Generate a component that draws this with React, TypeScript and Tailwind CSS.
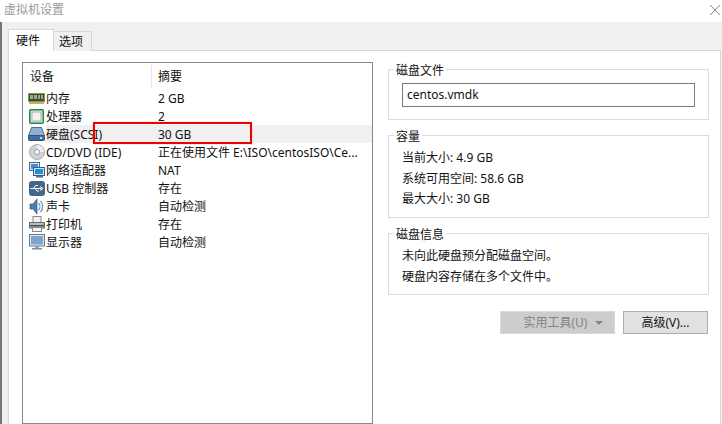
import type { ReactNode } from 'react'

const font = "font-['Noto_Sans','Noto_Sans_CJK_SC',sans-serif]"

function RamIcon() {
  return (
    <svg width="17" height="11" viewBox="0 0 17 11">
      <rect x="0" y="0" width="17" height="9" fill="#6fa34a" />
      <rect x="1" y="1" width="15" height="7" fill="#3c4a36" />
      <rect x="2" y="2" width="3" height="4" fill="#a5a88e" />
      <rect x="6" y="2" width="3" height="4" fill="#a5a88e" />
      <rect x="10" y="2" width="2" height="4" fill="#a5a88e" />
      <rect x="13" y="2" width="2" height="4" fill="#a5a88e" />
      <rect x="1" y="9" width="15" height="2" fill="#c9b25a" />
    </svg>
  )
}

function CpuIcon() {
  return (
    <svg width="15" height="15" viewBox="0 0 15 15">
      <rect x="0.75" y="0.75" width="13.5" height="13.5" rx="1" fill="#dfe9df" stroke="#1f8a4c" strokeWidth="1.5" />
      <rect x="3" y="3" width="9" height="9" fill="#f2f2ec" stroke="#a9b3a9" />
    </svg>
  )
}

function DiskIcon() {
  return (
    <svg width="17" height="14" viewBox="0 0 17 14">
      <path d="M3.5 0.5h10l3 8h-16z" fill="#8fb0d0" stroke="#4a6f96" />
      <rect x="0.5" y="8.5" width="16" height="5" rx="1" fill="#3f6f9f" stroke="#2d5378" />
      <rect x="12" y="10" width="2" height="2" fill="#b8e0f0" />
    </svg>
  )
}

function CdIcon() {
  return (
    <svg width="16" height="16" viewBox="0 0 16 16">
      <circle cx="8" cy="8" r="7.5" fill="#cfd1d3" stroke="#a8abae" />
      <path d="M8 1a7 7 0 0 1 7 7h-4a3 3 0 0 0-3-3z" fill="#eef0f2" />
      <circle cx="8" cy="8" r="2.5" fill="#fff" stroke="#9a9da0" />
    </svg>
  )
}

function NetIcon() {
  return (
    <svg width="16" height="16" viewBox="0 0 16 16">
      <rect x="0.5" y="0.5" width="10" height="8" fill="#dbe9f5" stroke="#3f6f9f" />
      <rect x="2" y="2" width="7" height="5" fill="#4f8fc8" />
      <rect x="4.5" y="5.5" width="11" height="8" fill="#cfe0ee" stroke="#33628f" />
      <rect x="6" y="7" width="8" height="5" fill="#1e90e0" />
      <rect x="7" y="14" width="7" height="1.5" fill="#5b6b7a" />
    </svg>
  )
}

function UsbIcon() {
  return (
    <svg width="16" height="15" viewBox="0 0 16 15">
      <rect x="0" y="0" width="16" height="15" rx="3" fill="#44678c" />
      <path d="M1.5 7.5h11M11 5.5l3 2-3 2M4.5 7.5l2-3h2.5M6 7.5l2 2.5h2" fill="none" stroke="#fff" strokeWidth="1" />
    </svg>
  )
}

function SoundIcon() {
  return (
    <svg width="15" height="17" viewBox="0 0 15 17">
      <path d="M1 6h3l4-5v15l-4-5h-3z" fill="#4f7fb0" stroke="#2f5680" strokeWidth="0.7" />
      <path d="M9.5 5a5 5 0 0 1 0 7M11.5 3a8 8 0 0 1 0 11" fill="none" stroke="#6f97bd" strokeWidth="1.3" />
    </svg>
  )
}

function PrinterIcon() {
  return (
    <svg width="16" height="16" viewBox="0 0 16 16">
      <rect x="4" y="0.5" width="8" height="6" fill="#f2f2f2" stroke="#8a8a8a" />
      <rect x="0.5" y="6.5" width="15" height="5.5" fill="#b9bcc0" stroke="#6a6d70" />
      <rect x="1" y="9" width="14" height="1.5" fill="#4a4d50" />
      <rect x="3.5" y="11.5" width="9" height="4" fill="#f4f4f4" stroke="#8a8a8a" />
      <rect x="13" y="7.5" width="1.5" height="1" fill="#5fc04f" />
    </svg>
  )
}

function MonitorIcon() {
  return (
    <svg width="16" height="16" viewBox="0 0 16 16">
      <rect x="0.5" y="0.5" width="15" height="11.5" fill="#dfe6ec" stroke="#5f7d99" />
      <rect x="2" y="2" width="12" height="8.5" fill="#7fa5c8" />
      <rect x="6" y="12" width="4" height="2" fill="#9aa5af" />
      <rect x="3" y="14" width="10" height="1.5" fill="#7f8c98" />
    </svg>
  )
}

const devices: { icon: ReactNode; name: string; value: string; selected?: boolean }[] = [
  { icon: <RamIcon />, name: '内存', value: '2 GB' },
  { icon: <CpuIcon />, name: '处理器', value: '2' },
  { icon: <DiskIcon />, name: '硬盘(SCSI)', value: '30 GB', selected: true },
  { icon: <CdIcon />, name: 'CD/DVD (IDE)', value: '正在使用文件 E:\\ISO\\centosISO\\Ce...' },
  { icon: <NetIcon />, name: '网络适配器', value: 'NAT' },
  { icon: <UsbIcon />, name: 'USB 控制器', value: '存在' },
  { icon: <SoundIcon />, name: '声卡', value: '自动检测' },
  { icon: <PrinterIcon />, name: '打印机', value: '存在' },
  { icon: <MonitorIcon />, name: '显示器', value: '自动检测' },
]

function Group({ title, className, children }: { title: string; className: string; children: ReactNode }) {
  return (
    <div className={`relative border border-[#dcdcdc] pl-[13px] ${className}`}>
      <span className="absolute left-[5px] top-[-7px] bg-white px-[2px] leading-[15px]">{title}</span>
      {children}
    </div>
  )
}

export default function App() {
  return (
    <div className={`${font} relative w-[722px] h-[424px] overflow-hidden bg-white text-[12px] text-[#111] flex flex-col`}>
      <div className="h-[22px] pl-[4px] pr-[2px] pb-[2px] flex justify-between items-center text-[#9a9a9a] shrink-0">
        <span>虚拟机设置</span>
        <svg width="10" height="10" viewBox="0 0 10 10">
          <path d="M0 0l10 10M10 0l-10 10" stroke="#8a8a8a" strokeWidth="1" />
        </svg>
      </div>
      <div className="flex-1 bg-[#f0f0f0] border-l-2 border-[#6f7880] pl-[6px] pt-[7px] pr-[1px] flex flex-col">
        <div className="flex h-[22px] items-end relative z-10">
          <div className="w-[46px] h-[22px] bg-white border border-b-0 border-[#d9d9d9] pl-[7px] flex items-center">硬件</div>
          <div className="w-[38px] h-[20px] bg-[#f0f0f0] border border-l-0 border-b-0 border-[#d9d9d9] pl-[5px] flex items-center">选项</div>
        </div>
        <div className="flex-1 bg-white border border-b-0 border-[#d9d9d9] mt-[-1px] pl-[13px] pt-[11px] pr-[10px] flex gap-[15px]">
          <div className="w-[351px] h-[362px] border border-[#828790] shrink-0">
            <div className="flex h-[25px] items-center pt-[2px]">
              <div className="w-[129px] pl-[7px] border-r border-[#e5e5e5] h-full flex items-center">设备</div>
              <div className="pl-[6px]">摘要</div>
            </div>
            <div className="flex flex-col pt-[1px]">
              {devices.map((d) => (
                <div key={d.name} className="flex h-[18px] items-center">
                  <div className="w-[23px] pl-[5px] pr-[1px] shrink-0 flex justify-center">{d.icon}</div>
                  <div className={`flex flex-1 h-full items-center pt-[2px] ${d.selected ? 'bg-[#f0f0f0]' : ''}`}>
                    <span className="w-[112px] whitespace-nowrap">{d.name}</span>
                    <span className="whitespace-nowrap">{d.value}</span>
                  </div>
                </div>
              ))}
            </div>
          </div>
          <div className="w-[321px] flex flex-col pt-[7px]">
            <Group title="磁盘文件" className="h-[51px] pt-[13px]">
              <div className="h-[24px] w-[293px] border border-[#7a7a7a] px-[4px] leading-[21px]">centos.vmdk</div>
            </Group>
            <Group title="容量" className="h-[83px] mt-[15px] pt-[12px]">
              <div className="leading-[20.5px]">
                <div>当前大小: 4.9 GB</div>
                <div>系统可用空间: 58.6 GB</div>
                <div>最大大小: 30 GB</div>
              </div>
            </Group>
            <Group title="磁盘信息" className="h-[62px] mt-[15px] pt-[11px]">
              <div className="leading-[21px]">
                <div>未向此硬盘预分配磁盘空间。</div>
                <div>硬盘内容存储在多个文件中。</div>
              </div>
            </Group>
            <div className="flex justify-end gap-[8px] mt-[16px] pr-[1px]">
              <button className="w-[115px] h-[23px] bg-[#cccccc] border border-[#d9d9d9] text-[#838383] flex items-center justify-center gap-[8px] pl-[12px]">
                <span>实用工具(U)</span>
                <span className="w-0 h-0 border-x-[4px] border-x-transparent border-t-[4px] border-t-[#838383]" />
              </button>
              <button className="w-[85px] h-[23px] bg-[#e1e1e1] border border-[#adadad]">高级(V)...</button>
            </div>
          </div>
        </div>
      </div>
      {/* red annotation over the selected row */}
      <div className="absolute left-[93px] top-[122px] w-[159px] h-[22px] border-2 border-[#f00000] shadow-[0_0_1px_#f88]" />
    </div>
  )
}
